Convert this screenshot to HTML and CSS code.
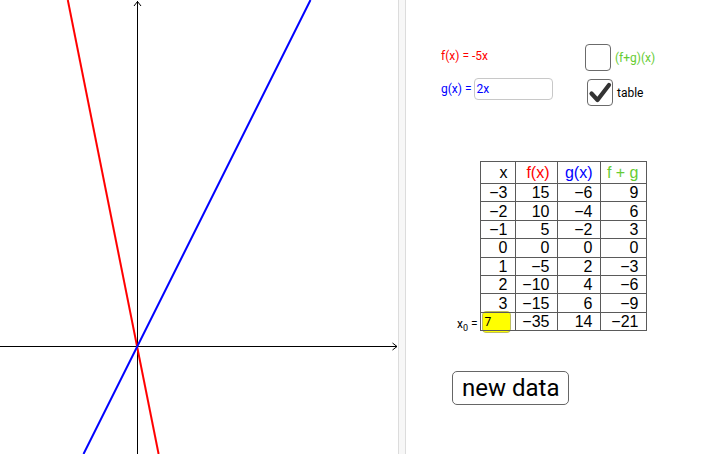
FILE: index.html
```html
<!DOCTYPE html>
<html>
<head>
<meta charset="utf-8">
<link rel="stylesheet" href="styles.css">
</head>
<body>
<div class="app">
  <div class="graphics">
    <svg width="398" height="454" viewBox="0 0 398 454">
      <line x1="137.5" y1="1" x2="137.5" y2="454" stroke="#000" stroke-width="1"/>
      <polyline points="134,6 137.5,1.5 141,6" fill="none" stroke="#000" stroke-width="1"/>
      <line x1="0" y1="346.5" x2="397" y2="346.5" stroke="#000" stroke-width="1"/>
      <polyline points="392.5,343 397,346.5 392.5,350" fill="none" stroke="#000" stroke-width="1"/>
      <line x1="67.8" y1="0" x2="158.6" y2="454" stroke="#ff0000" stroke-width="2"/>
      <line x1="310.5" y1="0" x2="83.5" y2="454" stroke="#0000ff" stroke-width="2"/>
    </svg>
  </div>
  <div class="divider"></div>
  <div class="panel">
    <div class="top">
      <div class="funcs">
        <div class="fline red">f(x) = -5x</div>
        <div class="gline">
          <span class="blue">g(x) =</span>
          <span class="input blue">2x</span>
        </div>
      </div>
      <div class="checks">
        <div class="check">
          <span class="box"></span>
          <span class="green">(f+g)(x)</span>
        </div>
        <div class="check second">
          <span class="box">
            <svg width="24" height="24" viewBox="0 0 24 24"><path d="M3.5 12.5 L9.5 19 L21 4" fill="none" stroke="#333" stroke-width="4.2" stroke-linecap="round" stroke-linejoin="round"/></svg>
          </span>
          <span>table</span>
        </div>
      </div>
    </div>
    <table class="values">
      <colgroup><col class="c0"><col class="c1"><col class="c2"><col class="c3"><col class="c4"></colgroup>
      <tr class="head"><td class="lbl"></td><td>x</td><td class="red">f(x)</td><td class="blue">g(x)</td><td class="green">f + g</td></tr>
      <tr><td class="lbl"></td><td>−3</td><td>15</td><td>−6</td><td>9</td></tr>
      <tr><td class="lbl"></td><td>−2</td><td>10</td><td>−4</td><td>6</td></tr>
      <tr><td class="lbl"></td><td>−1</td><td>5</td><td>−2</td><td>3</td></tr>
      <tr><td class="lbl"></td><td>0</td><td>0</td><td>0</td><td>0</td></tr>
      <tr><td class="lbl"></td><td>1</td><td>−5</td><td>2</td><td>−3</td></tr>
      <tr><td class="lbl"></td><td>2</td><td>−10</td><td>4</td><td>−6</td></tr>
      <tr><td class="lbl"></td><td>3</td><td>−15</td><td>6</td><td>−9</td></tr>
      <tr><td class="lbl x0">x<sub>0</sub> =</td><td class="xin"><span class="yellow">7</span></td><td>−35</td><td>14</td><td>−21</td></tr>
    </table>
    <button class="btn">new data</button>
  </div>
</div>
</body>
</html>
```

FILE: styles.css
```css
html, body {
  margin: 0;
  padding: 0;
  background: #fff;
}
body {
  font-family: Roboto, "Liberation Sans", sans-serif;
  width: 713px;
  height: 454px;
  overflow: hidden;
}
.app {
  display: flex;
  height: 454px;
}
.graphics {
  width: 398px;
  height: 454px;
  flex: none;
}
.graphics svg {
  display: block;
}
.divider {
  width: 6px;
  flex: none;
  background: #f7f7f7;
  border-left: 1px solid #dcdcdc;
  border-right: 1px solid #dcdcdc;
}
.panel {
  flex: 1;
  display: flex;
  flex-direction: column;
  align-items: flex-start;
}
.red { color: #ff0000; }
.blue { color: #0000ff; }
.green { color: #66cc33; }

.top {
  display: flex;
  padding-left: 35px;
  padding-top: 44px;
}
.funcs {
  width: 144px;
  font-size: 12px;
}
.fline {
  height: 20px;
  line-height: 20px;
  margin-top: 2px;
}
.gline {
  display: flex;
  align-items: center;
  margin-top: 12px;
  height: 22px;
}
.gline .input {
  margin-left: 2px;
  width: 75px;
  height: 20px;
  line-height: 20px;
  border: 1px solid #c8c8c8;
  border-radius: 4px;
  padding-left: 2px;
  font-size: 12px;
}
.checks {
  display: flex;
  flex-direction: column;
  gap: 8px;
  font-size: 12px;
}
.check {
  display: flex;
  align-items: center;
  gap: 4px;
}
.check.second {
  margin-left: 2px;
}
.box {
  width: 24px;
  height: 25px;
  border: 1.5px solid #6b6b6b;
  border-radius: 4px;
  display: flex;
  align-items: center;
  justify-content: center;
  background: #fff;
}
.box svg {
  display: block;
}

.values {
  margin-top: 55px;
  margin-left: 50px;
  border-collapse: collapse;
  table-layout: fixed;
  width: 190px;
  font-family: "Liberation Sans", sans-serif;
  font-size: 16px;
}
.values col.c0 { width: 24px; }
.values col.c1 { width: 35px; }
.values col.c2 { width: 42px; }
.values col.c3 { width: 43px; }
.values col.c4 { width: 46px; }
.values td {
  border: 1px solid #5a5a5a;
  height: 17.4px;
  line-height: 17px;
  padding: 0 7px 0 0;
  text-align: right;
  color: #000;
}
.values td.red { color: #ff0000; }
.values td.blue { color: #0000ff; }
.values td.green { color: #66cc33; }
.values tr.head td {
  height: 21px;
}
.values td.lbl {
  border: none;
  padding: 0 2px 0 0;
  font-family: Roboto, sans-serif;
  font-size: 12px;
  white-space: nowrap;
}
.values td.x0 {
  vertical-align: bottom;
  line-height: 14px;
}
.x0 sub {
  font-size: 9px;
  vertical-align: -3px;
  line-height: 0;
}
.values td.xin {
  padding: 0;
  text-align: left;
}
.yellow {
  display: block;
  margin: -2px 0 -3px 1px;
  width: 25px;
  height: 20px;
  line-height: 20px;
  background: #ffff00;
  border: 1px solid #bdbd60;
  border-radius: 4px;
  font-family: Roboto, sans-serif;
  font-size: 12px;
  padding-left: 2px;
  box-sizing: content-box;
}

.btn {
  margin-top: 40px;
  margin-left: 46px;
  font-family: Roboto, sans-serif;
  font-size: 24px;
  color: #000;
  background: #fff;
  border: 1.5px solid #666;
  border-radius: 5px;
  padding: 0 9px;
  height: 34px;
  line-height: 30px;
}
```
